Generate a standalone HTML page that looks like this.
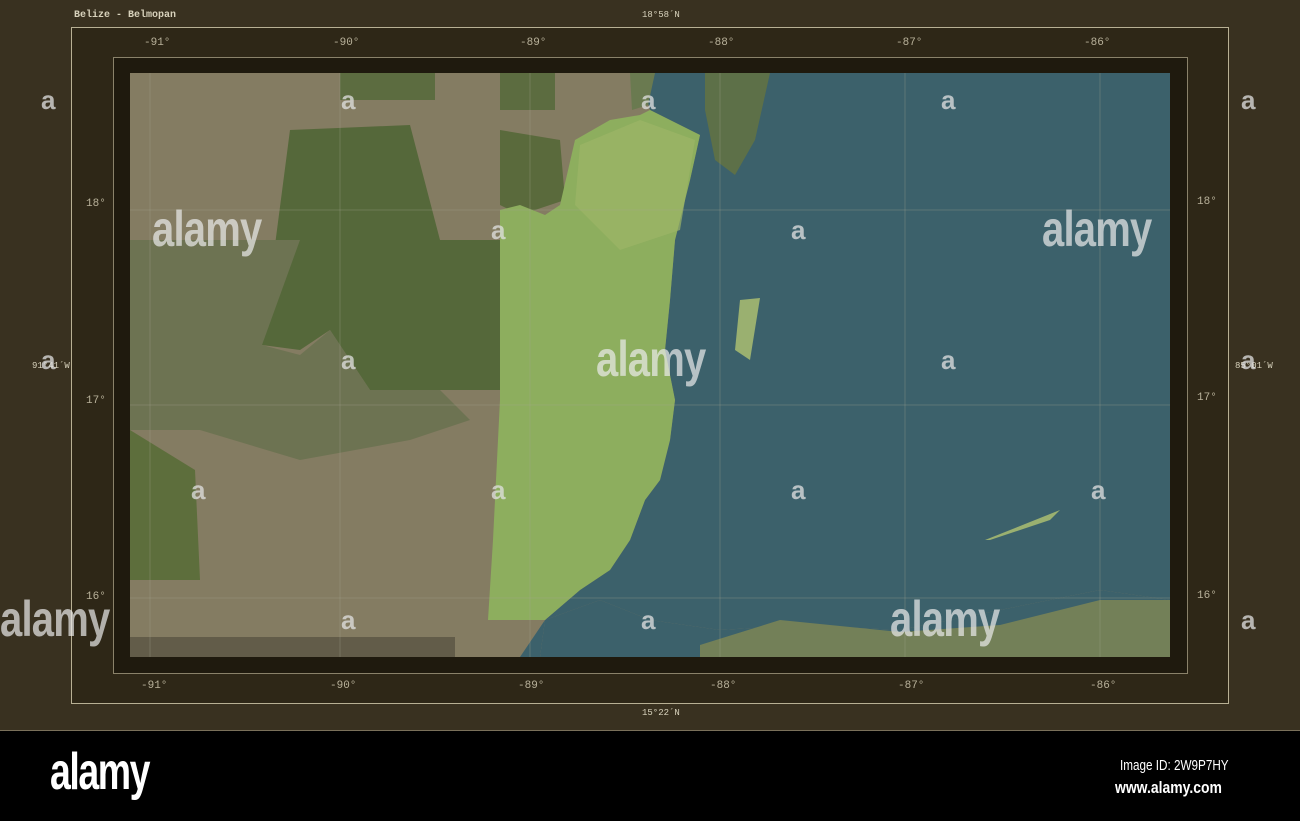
<!DOCTYPE html>
<html><head><meta charset="utf-8"><style>
body{margin:0;width:1300px;height:821px;background:#393120;overflow:hidden;position:relative;font-family:"Liberation Mono",monospace}
.t{position:absolute;color:#d8d2bc;font-size:10px}
.l{position:absolute;color:#b8b19a;font-size:11px}
.wm{position:absolute;color:rgba(235,235,235,.7);font-family:"Liberation Sans",sans-serif;font-weight:bold;transform:scaleX(.8);transform-origin:left top;letter-spacing:-1px}
.a{position:absolute;color:rgba(225,225,225,.75);font-family:"Liberation Sans",sans-serif;font-weight:bold;font-size:26px}
</style></head><body>
<div class="t" style="left:74px;top:10px;font-weight:bold">Belize - Belmopan</div>
<div class="t" style="left:642px;top:10px;font-size:9px">18°58´N</div>
<div class="t" style="left:642px;top:708px;font-size:9px">15°22´N</div>
<div style="position:absolute;left:71px;top:27px;width:1156px;height:675px;border:1px solid #b8b094;background:#2e2717"></div>
<div style="position:absolute;left:113px;top:57px;width:1073px;height:615px;border:1px solid #8a826a;background:#1f1a0e"></div>
<div class="l" style="left:144px;top:37px">-91°</div><div class="l" style="left:333px;top:37px">-90°</div><div class="l" style="left:520px;top:37px">-89°</div><div class="l" style="left:708px;top:37px">-88°</div><div class="l" style="left:896px;top:37px">-87°</div><div class="l" style="left:1084px;top:37px">-86°</div>
<div class="l" style="left:141px;top:680px">-91°</div><div class="l" style="left:330px;top:680px">-90°</div><div class="l" style="left:518px;top:680px">-89°</div><div class="l" style="left:710px;top:680px">-88°</div><div class="l" style="left:898px;top:680px">-87°</div><div class="l" style="left:1090px;top:680px">-86°</div>
<div class="l" style="left:86px;top:198px">18°</div><div class="l" style="left:86px;top:395px">17°</div><div class="l" style="left:86px;top:591px">16°</div>
<div class="l" style="left:1197px;top:196px">18°</div><div class="l" style="left:1197px;top:392px">17°</div><div class="l" style="left:1197px;top:590px">16°</div>
<div class="t" style="left:32px;top:361px;font-size:9px">91°41´W</div>
<div class="t" style="left:1235px;top:361px;font-size:9px">85°01´W</div>
<svg style="position:absolute;left:130px;top:73px" width="1040" height="584" viewBox="130 73 1040 584">
<rect x="130" y="73" width="1040" height="584" fill="#847c62"/>
<path d="M290 130 L410 125 L440 240 L500 240 L500 390 L370 390 L330 330 L300 350 L262 345 Z" fill="#55683a"/>
<path d="M500 130 L560 140 L565 200 L520 215 L500 205 Z" fill="#5a6a3c"/>
<path d="M340 73 L435 73 L435 100 L340 100 Z M500 73 L555 73 L555 110 L500 110Z" fill="#5c6c40"/>
<path d="M130 240 L300 240 L262 345 L300 355 L330 330 L370 390 L440 390 L470 420 L410 440 L300 460 L200 430 L130 430Z" fill="#6d7352"/>
<path d="M130 430 L195 470 L200 580 L130 580 Z" fill="#5d6e3c"/>
<path d="M640 73 L1170 73 L1170 600 L1100 590 L1000 610 L900 630 L800 625 L720 630 L650 620 L600 600 L545 620 L520 657 L540 657 L545 620 L580 590 L610 570 L630 540 L645 500 L660 480 L670 440 L675 400 L665 350 L670 300 L675 240 L690 180 L700 135 L650 110 Z" fill="#3c616b"/>
<path d="M545 620 L600 600 L650 620 L720 630 L800 625 L900 630 L1000 610 L1100 590 L1170 600 L1170 657 L540 657 Z" fill="#3c616b"/>
<path d="M700 645 L780 620 L900 632 L1000 625 L1100 600 L1170 600 L1170 657 L700 657Z" fill="#738058"/>
<path d="M705 73 L770 73 L755 140 L735 175 L715 160 L705 110Z" fill="#5d7048"/>
<path d="M630 73 L655 73 L648 105 L632 110Z" fill="#6a7a50"/>
<path d="M650 110 L700 135 L690 180 L675 240 L670 300 L665 350 L675 400 L670 440 L660 480 L645 500 L630 540 L610 570 L580 590 L545 620 L488 620 L493 540 L500 400 L500 210 L520 205 L545 215 L560 205 L575 140 L610 120 L640 115Z" fill="#8dae5e"/>
<path d="M580 145 L640 120 L695 140 L680 230 L620 250 L575 205Z" fill="#9cb566" opacity=".7"/>
<path d="M740 300 L760 298 L750 360 L735 350Z" fill="#9ab070"/>
<path d="M985 540 L1060 510 L1050 520 L990 540Z" fill="#9ab070"/>
<rect x="130" y="637" width="325" height="20" fill="#5a5444" opacity=".8"/>
<g stroke="#a9a694" stroke-width=".5" opacity=".6" fill="none">
<path d="M150 73V657M340 73V657M530 73V657M720 73V657M905 73V657M1100 73V657M130 210H1170M130 405H1170M130 598H1170"/>
</g>
</svg>
<div class="wm" style="left:152px;top:200px;font-size:50px">alamy</div>
<div class="wm" style="left:1042px;top:200px;font-size:50px">alamy</div>
<div class="wm" style="left:596px;top:330px;font-size:50px">alamy</div>
<div class="wm" style="left:0px;top:590px;font-size:50px">alamy</div>
<div class="wm" style="left:890px;top:590px;font-size:50px">alamy</div>
<div class="a" style="left:41px;top:85px">a</div><div class="a" style="left:341px;top:85px">a</div><div class="a" style="left:641px;top:85px">a</div><div class="a" style="left:941px;top:85px">a</div><div class="a" style="left:1241px;top:85px">a</div>
<div class="a" style="left:491px;top:215px">a</div><div class="a" style="left:791px;top:215px">a</div>
<div class="a" style="left:41px;top:345px">a</div><div class="a" style="left:341px;top:345px">a</div><div class="a" style="left:941px;top:345px">a</div><div class="a" style="left:1241px;top:345px">a</div>
<div class="a" style="left:191px;top:475px">a</div><div class="a" style="left:491px;top:475px">a</div><div class="a" style="left:791px;top:475px">a</div><div class="a" style="left:1091px;top:475px">a</div>
<div class="a" style="left:341px;top:605px">a</div><div class="a" style="left:641px;top:605px">a</div><div class="a" style="left:1241px;top:605px">a</div>
<div style="position:absolute;left:0;top:730px;width:1300px;height:1px;background:#7a705a"></div>
<div style="position:absolute;left:0;top:731px;width:1300px;height:90px;background:#000"></div>
<div style="position:absolute;left:50px;top:742px;color:#fff;font-family:'Liberation Sans',sans-serif;font-weight:bold;font-size:52px;transform:scaleX(.72);transform-origin:left top;letter-spacing:-2px">alamy</div>
<div style="position:absolute;left:1120px;top:757px;color:#fff;font-family:'Liberation Sans',sans-serif;font-size:15px;transform:scaleX(.78);transform-origin:left top">Image ID: 2W9P7HY</div>
<div style="position:absolute;left:1115px;top:778px;color:#fff;font-family:'Liberation Sans',sans-serif;font-weight:bold;font-size:17px;transform:scaleX(.82);transform-origin:left top">www.alamy.com</div>
</body></html>
